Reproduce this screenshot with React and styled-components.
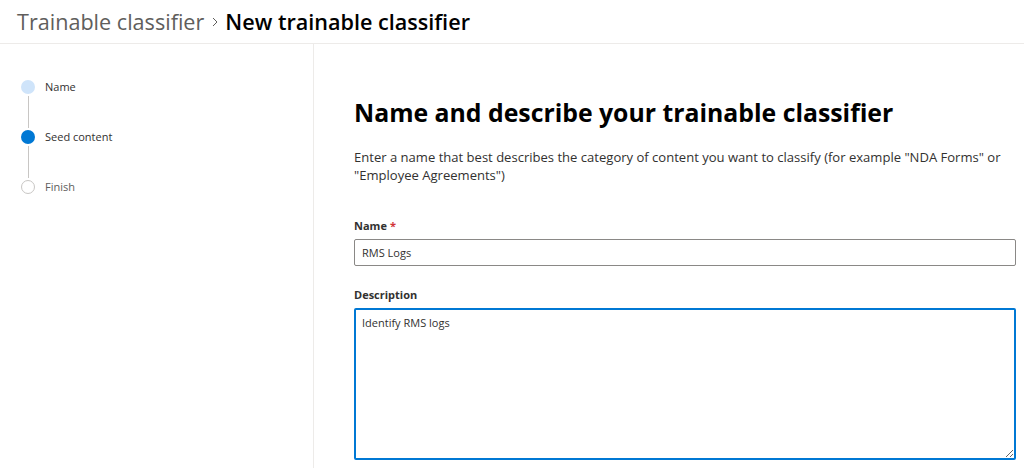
import React from "react";
import styled, { createGlobalStyle } from "styled-components";

const Global = createGlobalStyle`
  html, body { margin: 0; padding: 0; background: #fff; }
  body { font-family: "Open Sans", "Noto Sans", sans-serif; color: #323130; }
  * { box-sizing: border-box; }
`;

const Page = styled.div`
  width: 1024px;
  height: 468px;
  display: flex;
  flex-direction: column;
  overflow: hidden;
  background: #fff;
`;

const Header = styled.header`
  height: 44px;
  flex: none;
  display: flex;
  align-items: center;
  padding-left: 17px;
  border-bottom: 1px solid #edebe9;
  font-size: 21.6px;
  white-space: nowrap;
`;

const Crumb = styled.span`
  color: #605e5c;
`;

const Chevron = styled.svg`
  width: 10px;
  height: 12px;
  margin: 0 5px 0 6px;
`;

const Current = styled.span`
  color: #000;
  font-weight: 600;
`;

const Body = styled.div`
  flex: 1;
  display: flex;
  min-height: 0;
`;

const Side = styled.nav`
  width: 314px;
  flex: none;
  border-right: 1px solid #edebe9;
  padding: 36px 0 0 21px;
`;

const Step = styled.div`
  display: flex;
  align-items: flex-start;
  gap: 10px;
  height: 50px;
`;

const Marker = styled.div`
  width: 14px;
  display: flex;
  flex-direction: column;
  align-items: center;
  align-self: stretch;
`;

const Dot = styled.span`
  width: 14px;
  height: 14px;
  border-radius: 50%;
  flex: none;
  background: ${(p) => (p.$state === "done" ? "#cfe4fa" : p.$state === "active" ? "#0078d4" : "#fff")};
  border: ${(p) => (p.$state === "todo" ? "1px solid #c8c6c4" : "none")};
`;

const Line = styled.span`
  width: 1px;
  flex: 1;
  margin: 2px 0;
  background: #c8c6c4;
`;

const StepLabel = styled.span`
  font-size: 11px;
  line-height: 14px;
  color: ${(p) => (p.$strong ? "#323130" : "#605e5c")};
`;

const Main = styled.main`
  flex: 1;
  padding: 50px 8px 0 40px;
`;

const Title = styled.h1`
  margin: 0;
  font-size: 24.8px;
  font-weight: 700;
  color: #000;
  line-height: 36px;
`;

const Intro = styled.p`
  margin: 18px 0 0;
  font-size: 13.05px;
  line-height: 18px;
  color: #323130;
  max-width: 662px;
`;

const Field = styled.div`
  display: flex;
  flex-direction: column;
  margin-top: ${(p) => p.$top}px;
`;

const Label = styled.label`
  font-size: 11px;
  font-weight: 700;
  line-height: 14px;
  color: #323130;
  margin-bottom: 6px;
`;

const Req = styled.span`
  color: #d13438;
  margin-left: 3px;
`;

const Input = styled.input`
  width: 662px;
  height: 27px;
  border: 1px solid #8a8886;
  border-radius: 2px;
  padding: 0 7px;
  font-family: inherit;
  font-size: 11px;
  color: #323130;
  outline: none;
`;

const TextArea = styled.textarea`
  width: 662px;
  height: 152px;
  border: 2px solid #0078d4;
  border-radius: 2px;
  padding: 5px 6px;
  font-family: inherit;
  font-size: 11px;
  color: #323130;
  outline: none;
  resize: both;
`;

const steps = [
  { label: "Name", state: "done" },
  { label: "Seed content", state: "active" },
  { label: "Finish", state: "todo" },
];

export default function App() {
  return (
    <Page>
      <Global />
      <Header>
        <Crumb>Trainable classifier</Crumb>
        <Chevron viewBox="0 0 10 12">
          <path d="M3 2 L7 6 L3 10" fill="none" stroke="#605e5c" strokeWidth="1" />
        </Chevron>
        <Current>New trainable classifier</Current>
      </Header>
      <Body>
        <Side>
          {steps.map((s, i) => (
            <Step key={s.label}>
              <Marker>
                <Dot $state={s.state} />
                {i < steps.length - 1 && <Line />}
              </Marker>
              <StepLabel $strong={s.state !== "todo"}>{s.label}</StepLabel>
            </Step>
          ))}
        </Side>
        <Main>
          <Title>Name and describe your trainable classifier</Title>
          <Intro>
            Enter a name that best describes the category of content you want to classify (for example "NDA Forms" or "Employee Agreements")
          </Intro>
          <Field $top={35}>
            <Label>
              Name<Req>*</Req>
            </Label>
            <Input defaultValue="RMS Logs" />
          </Field>
          <Field $top={22}>
            <Label>Description</Label>
            <TextArea defaultValue="Identify RMS logs" />
          </Field>
        </Main>
      </Body>
    </Page>
  );
}
